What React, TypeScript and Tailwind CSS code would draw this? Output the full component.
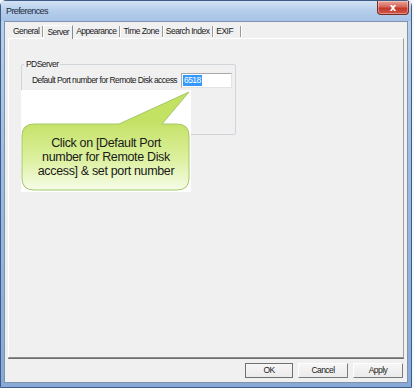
const ui = "font-['Liberation_Sans',Arial,sans-serif] text-[8.5px] tracking-[-0.55px]";

const tabs = ['General', 'Server', 'Appearance', 'Time Zone', 'Search Index', 'EXIF'];

function TitleBar() {
  return (
    <div className="flex h-[20px] items-start justify-between bg-[linear-gradient(180deg,#d3e3f5_0%,#b7cfec_45%,#a6c2e6_100%)] pl-[5px] pr-[2px]">
      <span className="mt-[5px] font-['Liberation_Sans',Arial,sans-serif] text-[9px] leading-[10px] tracking-[-0.6px] text-[#1e2a3a]">
        Preferences
      </span>
      <button
        type="button"
        className="flex h-[14px] w-[32px] items-center justify-center rounded-b-[4px] border border-t-0 border-[#7b2c24] bg-[linear-gradient(180deg,#e9a497_0%,#d6655a_45%,#c0392b_55%,#d0584a_100%)] text-[10px] font-bold leading-none text-white shadow-[inset_0_0_0_1px_rgba(255,255,255,0.35)]"
        aria-label="Close"
      >
        <span className="font-['DejaVu_Sans',sans-serif]">x</span>
      </button>
    </div>
  );
}

function TabStrip() {
  return (
    <div className={`${ui} flex h-[16px] items-end pl-[2px] leading-none text-[#1b1b1b]`}>
      {tabs.map((tab) => {
        const active = tab === 'Server';
        return active ? (
          <div
            key={tab}
            className="relative z-10 -mb-px flex h-[14px] items-center border-l border-t border-r border-l-white border-t-white border-r-[#8a8a8a] bg-[#f0f0f0] px-[3px]"
          >
            {tab}
          </div>
        ) : (
          <div
            key={tab}
            className={`mb-px flex h-[11px] items-center border-r border-[#9a9a9a] px-[3px] shadow-[1px_0_0_#ffffff] ${
              tab === 'EXIF' ? 'w-[28px]' : ''
            }`}
          >
            {tab}
          </div>
        );
      })}
    </div>
  );
}

function Callout() {
  return (
    <div className="absolute left-[12px] top-[51px] h-[102px] w-[170px] bg-white">
      <svg width="170" height="102" viewBox="0 0 170 102" className="absolute inset-0">
        <defs>
          <linearGradient id="bubble" x1="0" y1="30" x2="0" y2="100" gradientUnits="userSpaceOnUse">
            <stop offset="0" stopColor="#c3e163" />
            <stop offset="0.55" stopColor="#dcf09e" />
            <stop offset="1" stopColor="#f6fce8" />
          </linearGradient>
        </defs>
        <path
          d="M13,34 H98 L168,2 L141,34 H156 Q168,34 168,46 V88 Q168,100 156,100 H13 Q1,100 1,88 V46 Q1,34 13,34 Z"
          fill="url(#bubble)"
          stroke="#a5c866"
          strokeWidth="1"
        />
      </svg>
      <p className="absolute left-0 right-0 top-[46px] whitespace-nowrap text-center font-['Liberation_Sans',Arial,sans-serif] text-[12.5px] leading-[14px] tracking-[-0.35px] text-[#1a1a1a]">
        Click on [Default Port
        <br />
        number for Remote Disk
        <br />
        access] &amp; set port number
      </p>
    </div>
  );
}

function ServerPanel() {
  return (
    <div className="relative h-[320px] border border-l-white border-t-white border-r-[#a0a0a0] border-b-[#8c8c8c] bg-[#f0f0f0] pl-[12px] pt-[20px] shadow-[0_1px_0_#6f6f6f]">
      <fieldset className="h-[76px] w-[215px] rounded-[2px] border border-[#d0d5da] pl-[10px] pr-[3px]">
        <legend className={`${ui} ml-[-8px] px-[2px] leading-[10px] text-[#1b1b1b]`}>PDServer</legend>
        <div className="mt-[4px] flex items-center justify-between">
          <span className={`${ui} whitespace-nowrap leading-none tracking-[-0.7px] text-[#1b1b1b]`}>Default Port number for Remote Disk access</span>
          <div className="flex h-[15px] w-[51px] items-center border border-t-[#a9a9a9] border-l-[#a9a9a9] border-r-[#e3e3e3] border-b-[#e3e3e3] bg-white pl-[1px]">
            <span className={`${ui} bg-[#3399ff] px-px leading-[11px] text-white`}>6518</span>
          </div>
        </div>
      </fieldset>
      <Callout />
    </div>
  );
}

function DialogButton({ label, isDefault }: { label: string; isDefault?: boolean }) {
  return (
    <button
      type="button"
      className={`${ui} flex h-[15px] items-center justify-center border bg-[linear-gradient(180deg,#f6f6f6_0%,#ebebeb_100%)] leading-none text-[#1b1b1b] ${
        isDefault ? 'w-[48px] border-[#707070]' : 'w-[50px] border-t-white border-l-white border-r-[#7a7a7a] border-b-[#7a7a7a]'
      }`}
    >
      {label}
    </button>
  );
}

export default function App() {
  return (
    <div className="h-[388px] w-[414px] overflow-hidden bg-[#f4f7fb]">
      <div className="flex h-[388px] w-[412px] flex-col rounded-t-[6px] border border-[#3f5c85] bg-[linear-gradient(180deg,#bcd3ee_0%,#9fbde4_40%,#86a9d8_100%)]">
        <TitleBar />
        <div className="mx-[3px] mb-[4px] flex flex-1 flex-col border border-[#7f93ad] bg-[#f0f0f0] px-[3px]">
          <TabStrip />
          <ServerPanel />
          <div className="mt-[5px] flex justify-end gap-[5px] pr-px">
            <DialogButton label="OK" isDefault />
            <DialogButton label="Cancel" />
            <DialogButton label="Apply" />
          </div>
        </div>
      </div>
    </div>
  );
}
